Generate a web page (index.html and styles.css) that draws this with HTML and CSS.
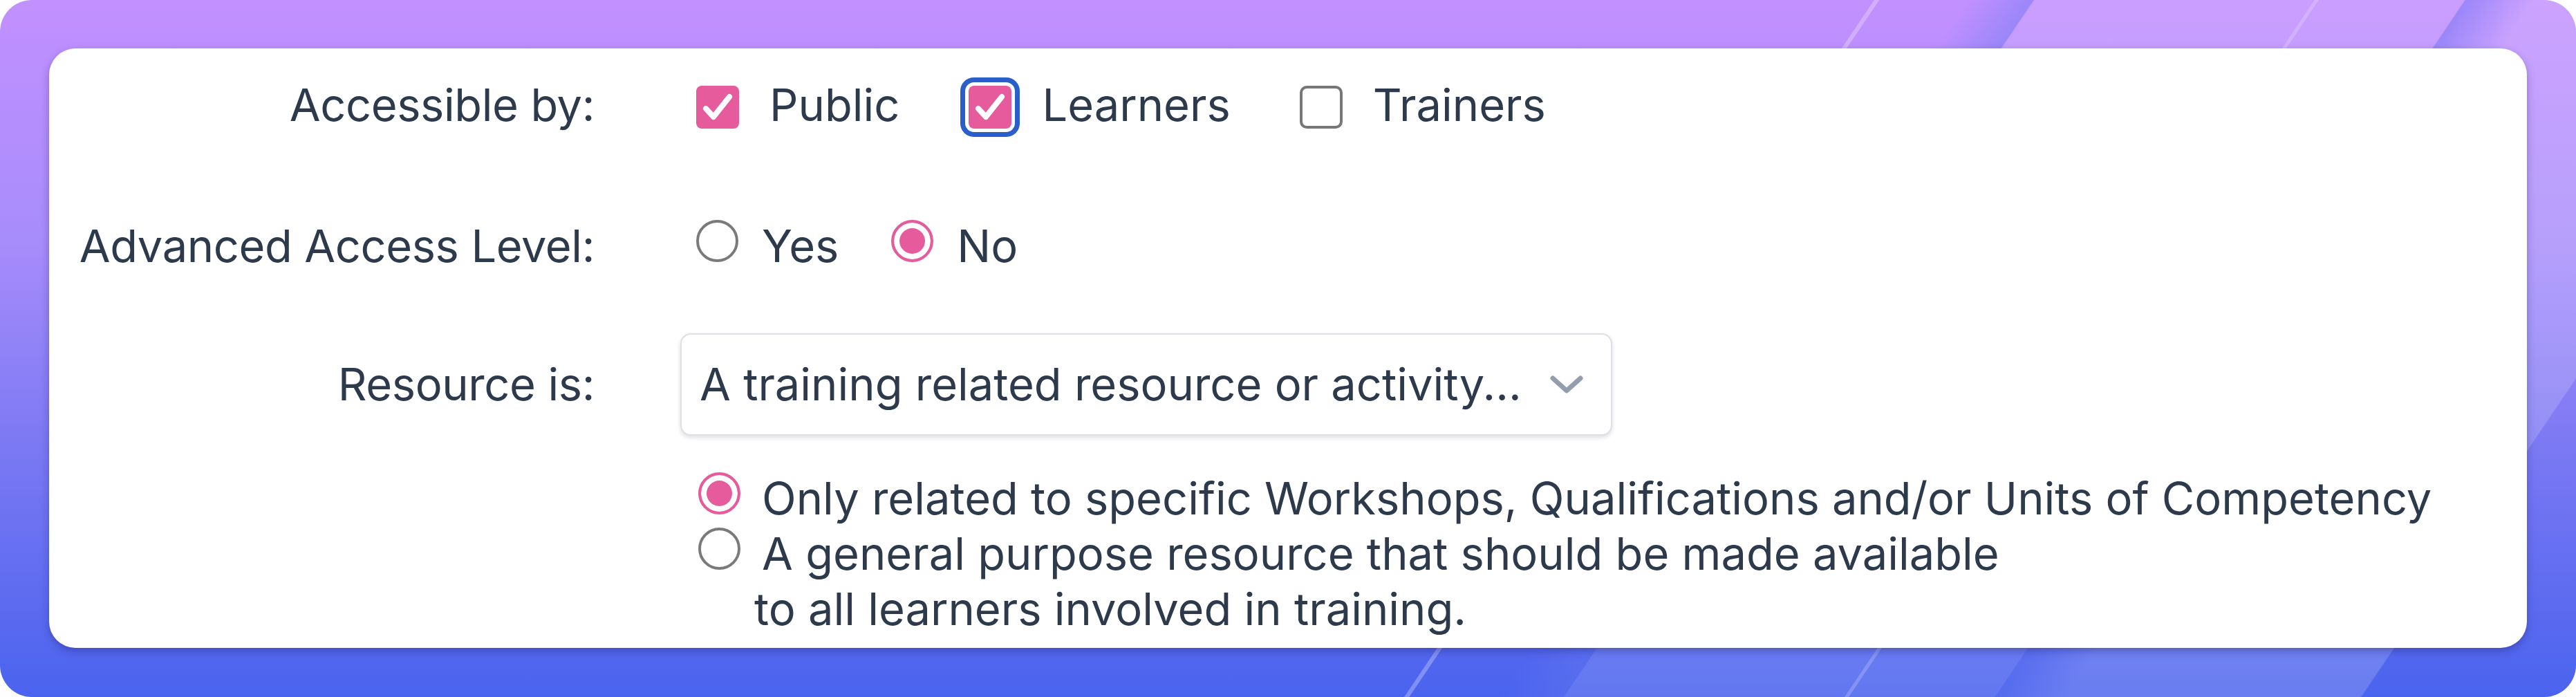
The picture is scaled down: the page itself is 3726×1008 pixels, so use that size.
FILE: index.html
```html
<!DOCTYPE html>
<html lang="en">
<head>
<meta charset="utf-8">
<title>Resource access</title>
<link rel="stylesheet" href="styles.css">
</head>
<body>
<div class="frame">
  <form class="card">
    <div class="field field-access">
      <div class="label">Accessible by:</div>
      <div class="control choices-checks">
        <label class="choice"><span class="checkbox is-checked"><svg viewBox="0 0 62 62" width="62" height="62"><polyline points="14,33 25,45 48,16" fill="none" stroke="#fff" stroke-width="8" stroke-linecap="round" stroke-linejoin="round"/></svg></span>Public</label><label class="choice"><span class="checkbox is-checked is-focused"><svg viewBox="0 0 62 62" width="62" height="62"><polyline points="14,33 25,45 48,16" fill="none" stroke="#fff" stroke-width="8" stroke-linecap="round" stroke-linejoin="round"/></svg></span>Learners</label><label class="choice"><span class="checkbox"></span>Trainers</label>
      </div>
    </div>

    <div class="field field-advanced">
      <div class="label">Advanced Access Level:</div>
      <div class="control choices-radios">
        <label class="choice"><span class="radio"></span>Yes</label><label class="choice"><span class="radio is-checked"></span>No</label>
      </div>
    </div>

    <div class="field field-resource">
      <div class="label">Resource is:</div>
      <div class="control">
        <div class="select">
          <span class="select-text">A training related resource or activity...</span>
          <svg class="chevron" viewBox="0 0 48 26" width="48" height="26"><polyline points="4,4 24,22 44,4" fill="none" stroke="#949dab" stroke-width="7" stroke-linecap="round" stroke-linejoin="round"/></svg>
        </div>
      </div>
    </div>

    <div class="field field-scope">
      <div class="label"></div>
      <div class="control options">
        <label class="option"><span class="radio is-checked"></span>Only related to specific Workshops, Qualifications and/or Units of Competency</label>
        <label class="option"><span class="radio"></span>A general purpose resource that should be made available<span class="option-cont">to all learners involved in training.</span></label>
      </div>
    </div>
  </form>
</div>
</body>
</html>
```

FILE: styles.css
```css
html, body {
  margin: 0;
  padding: 0;
  background: #ffffff;
}

body {
  font-family: "Inter", "Noto Sans", sans-serif;
  font-size: 65px;
  color: #2d3a4c;
}

.frame {
  box-sizing: border-box;
  width: 3726px;
  height: 1008px;
  border-radius: 46px;
  padding: 70px 71px 71px 71px;
  display: flex;
  background-image:
    linear-gradient(124deg,
      rgba(255,255,255,0) 0px,
      rgba(255,255,255,0) 2247px,
      rgba(255,255,255,0.28) 2248px,
      rgba(255,255,255,0.28) 2253px,
      rgba(255,255,255,0) 2254px,
      rgba(100,120,240,0) 2360px,
      rgba(100,120,240,0.4) 2438px,
      rgba(255,255,255,0.13) 2440px,
      rgba(255,255,255,0.13) 2775px,
      rgba(255,255,255,0.3) 2776px,
      rgba(255,255,255,0.3) 2780px,
      rgba(255,255,255,0.13) 2781px,
      rgba(255,255,255,0.13) 2955px,
      rgba(100,120,240,0.4) 2957px,
      rgba(255,255,255,0.17) 3040px,
      rgba(255,255,255,0.17) 3394px,
      rgba(255,255,255,0) 3396px),
    linear-gradient(180deg, #c290ff 0%, #a78cfb 35%, #7a78f3 65%, #4a63ee 100%);
}

.card {
  flex: 1;
  margin: 0;
  background: #ffffff;
  border-radius: 38px;
  box-shadow: 0 5px 12px rgba(30, 30, 100, 0.35);
  padding: 42px 0 0 0;
  box-sizing: border-box;
}

.field {
  display: grid;
  grid-template-columns: 789px auto;
  column-gap: 147px;
  align-items: baseline;
  line-height: 80px;
}

.field-advanced {
  margin-top: 124px;
}

.field-resource {
  margin-top: 86px;
  align-items: center;
}

.field-scope {
  margin-top: 51px;
}

.label {
  text-align: right;
  white-space: nowrap;
  letter-spacing: -0.4px;
}

.control {
  white-space: nowrap;
  justify-self: start;
}

.choices-checks .choice + .choice {
  margin-left: 100px;
}

.choices-radios .choice + .choice {
  margin-left: 76px;
}

.checkbox {
  display: inline-block;
  box-sizing: border-box;
  width: 62px;
  height: 62px;
  border-radius: 8px;
  vertical-align: middle;
  margin-right: 44px;
  margin-bottom: 4px;
}

.checkbox svg {
  display: block;
}

.checkbox.is-checked {
  background: #e55b9b;
}

.checkbox:not(.is-checked) {
  border: 4px solid #777777;
  border-radius: 10px;
  background: #ffffff;
}

.checkbox.is-focused {
  box-shadow: 0 0 0 5px #ffffff, 0 0 0 12px #2a5ec8;
}

.radio {
  display: inline-block;
  box-sizing: border-box;
  width: 61px;
  height: 61px;
  border-radius: 50%;
  border: 4px solid #7a7a7a;
  background: #ffffff;
  vertical-align: baseline;
  margin-right: 34px;
}

.radio.is-checked {
  border-color: #e55b9b;
  background: #e55b9b;
  box-shadow: inset 0 0 0 8px #ffffff;
}

.select {
  display: inline-flex;
  align-items: center;
  gap: 41px;
  box-sizing: border-box;
  height: 148px;
  margin-left: -23px;
  padding: 0 40px 0 26px;
  border: 2px solid #dde0e4;
  border-radius: 15px;
  background: #ffffff;
  box-shadow: 0 3px 6px rgba(15, 23, 42, 0.14);
}

.chevron {
  display: block;
}

.options {
  padding-left: 3px;
}

.option {
  display: block;
  white-space: nowrap;
}

.option .radio {
  margin-right: 31px;
}

.option-cont {
  display: block;
  padding-left: 81px;
}
```
